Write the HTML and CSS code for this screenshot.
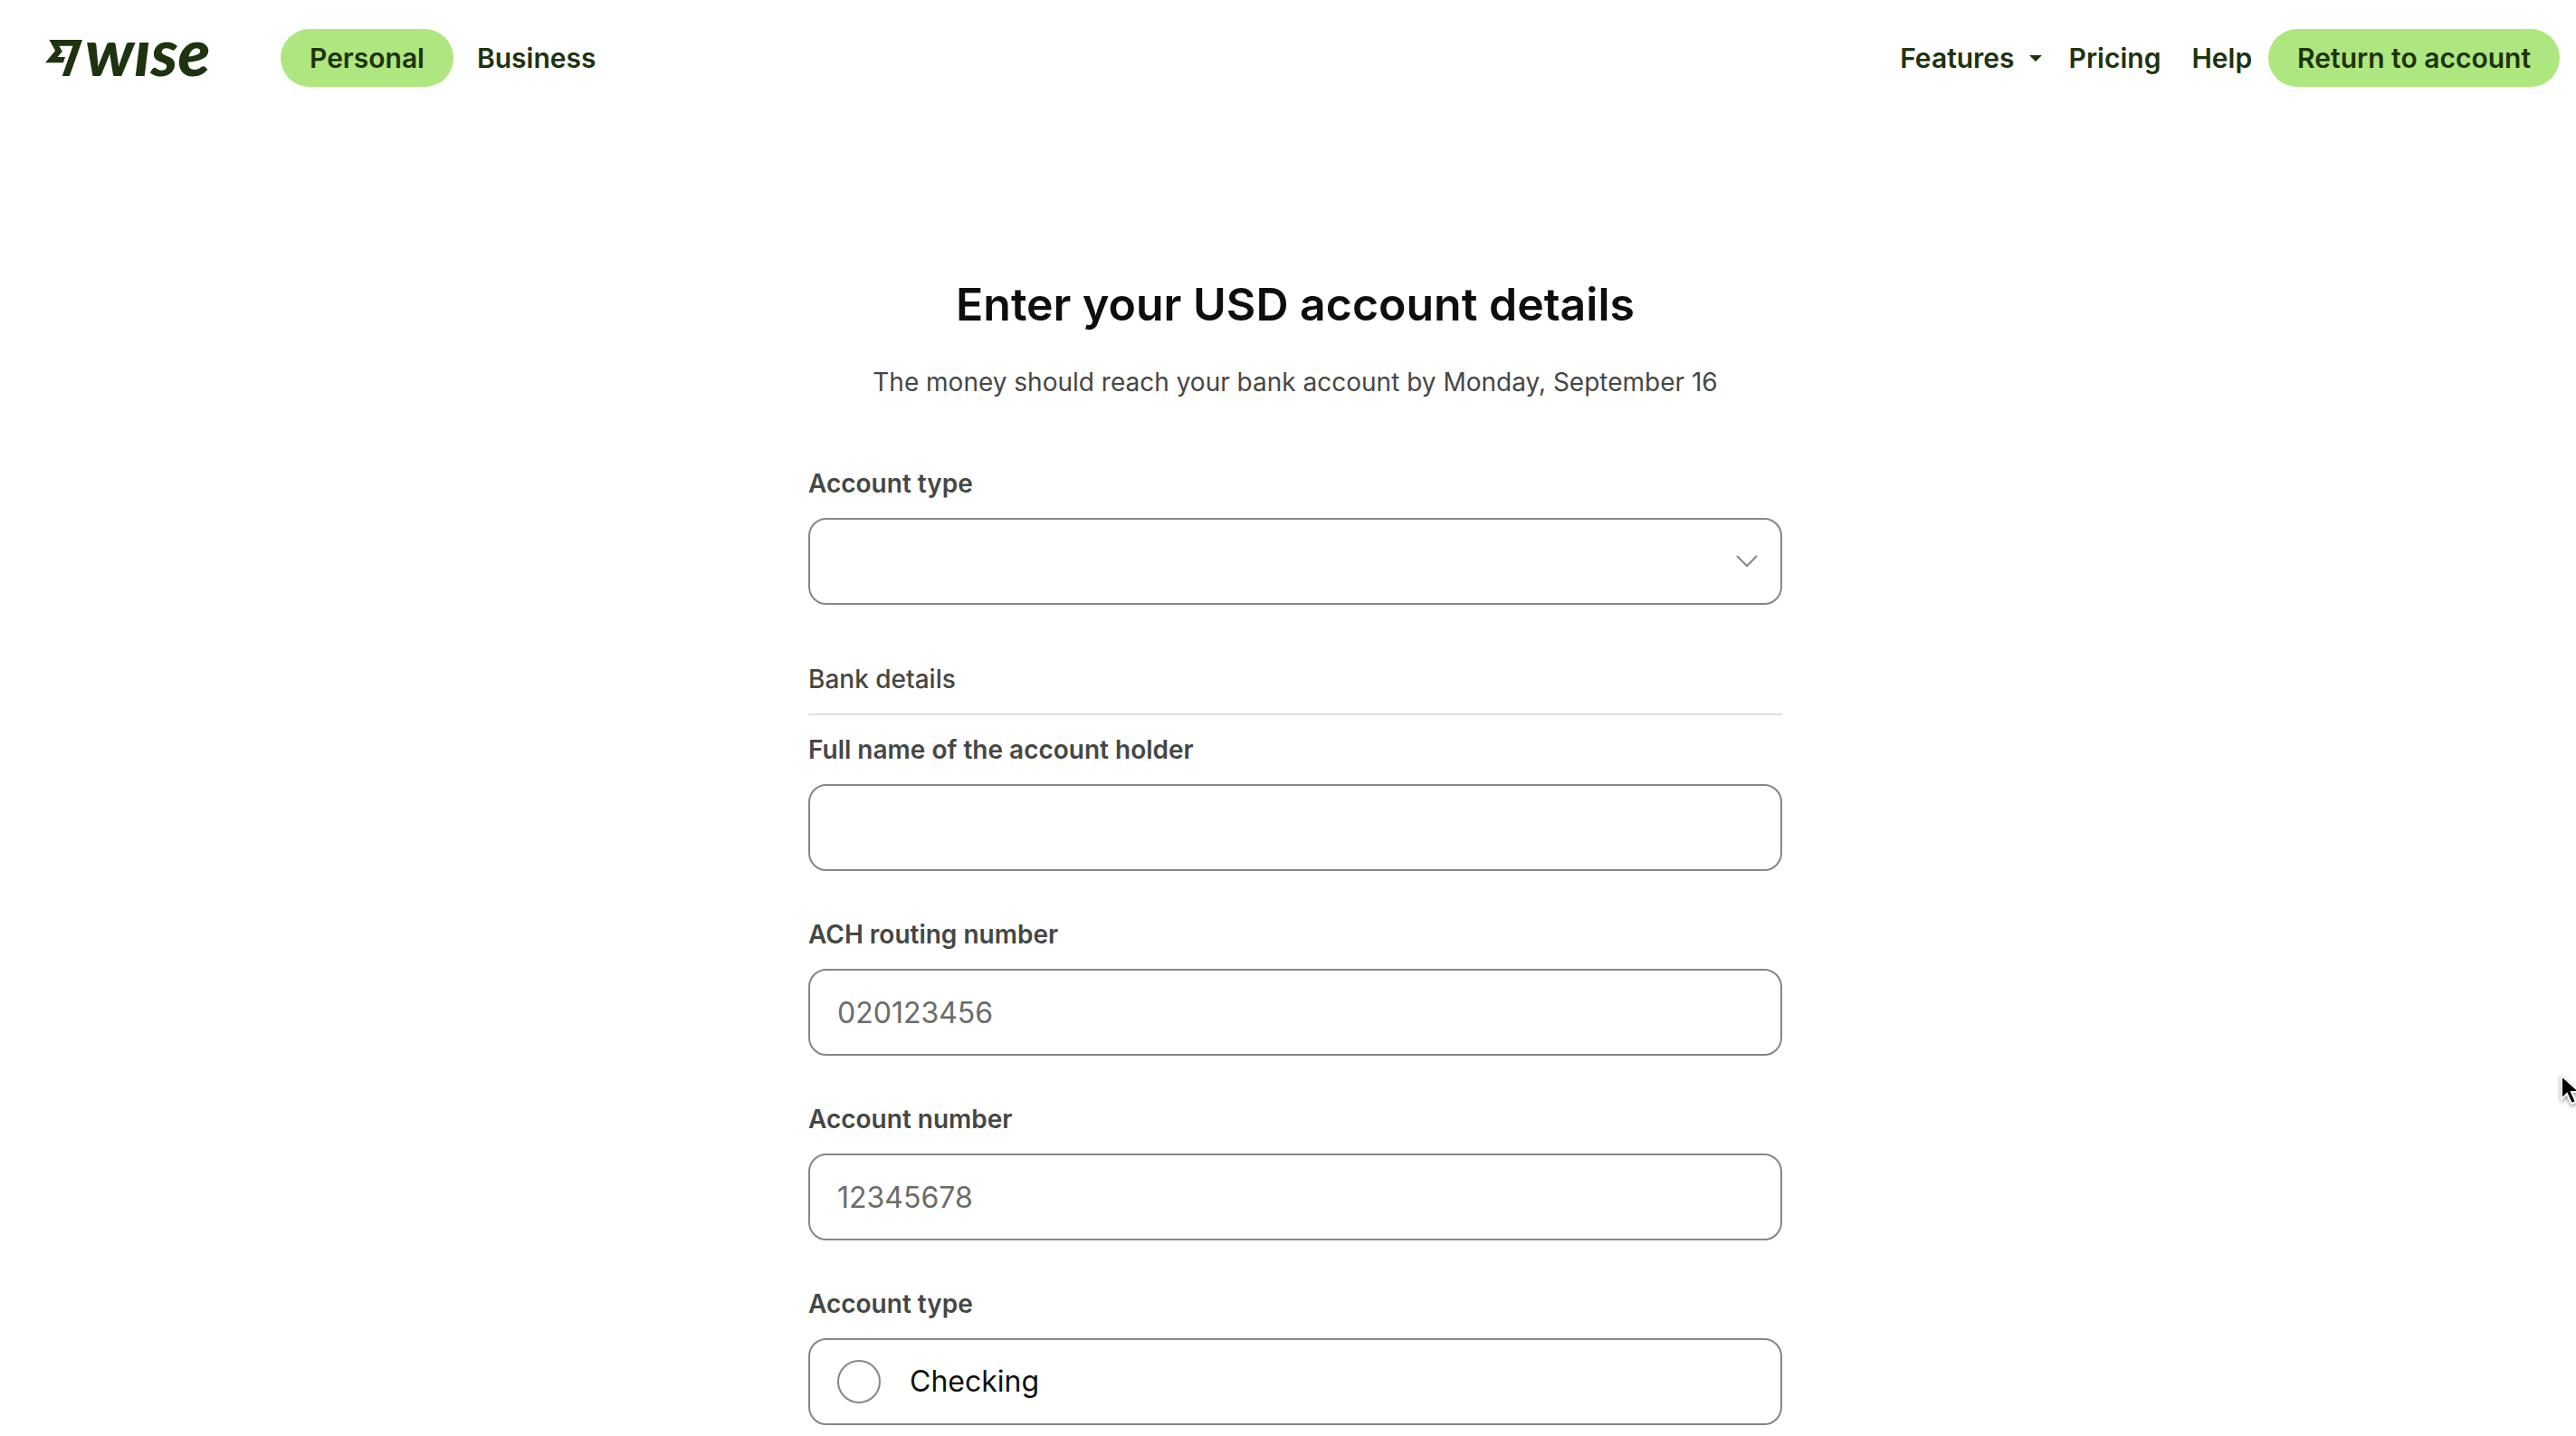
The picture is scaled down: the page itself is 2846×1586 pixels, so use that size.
FILE: index.html
```html
<!DOCTYPE html>
<html lang="en">
<head>
<meta charset="utf-8">
<meta name="viewport" content="width=device-width, initial-scale=1">
<title>Enter your USD account details</title>
<link rel="stylesheet" href="styles.css">
</head>
<body>

<header class="header">
  <a class="logo" href="#" aria-label="Wise">
    <svg class="flag" viewBox="0 0.6 24 22.8" preserveAspectRatio="none" aria-hidden="true">
      <path d="M6.488 7.469 0 15.05h11.585l1.301-3.576H7.922l3.033-3.507.01-.092L8.993 4.48h8.873l-6.878 18.925h4.706L24 .595H2.543l3.945 6.874z"/>
    </svg>
    <span class="wordmark">wıse</span>
  </a>

  <nav class="nav nav-left">
    <a class="pill" href="#">Personal</a>
    <a class="business" href="#">Business</a>
  </nav>

  <nav class="nav nav-right">
    <button class="features" type="button">Features <span class="caret"></span></button>
    <a class="pricing" href="#">Pricing</a>
    <a class="help" href="#">Help</a>
    <a class="pill" href="#">Return to account</a>
  </nav>
</header>

<main class="main">
  <div class="container">
    <h1>Enter your USD account details</h1>
    <p class="subtitle">The money should reach your bank account by Monday, September 16</p>

    <form>
      <div class="field">
        <label for="type">Account type</label>
        <div class="select-wrap">
          <select id="type" class="control">
            <option value=""></option>
          </select>
          <svg class="chevron" viewBox="0 0 24 14" aria-hidden="true">
            <path d="M1 1l11 11L23 1"/>
          </svg>
        </div>
      </div>

      <h2>Bank details</h2>

      <div class="field">
        <label for="holder">Full name of the account holder</label>
        <input id="holder" class="control" type="text">
      </div>

      <div class="field">
        <label for="routing">ACH routing number</label>
        <input id="routing" class="control" type="text" placeholder="020123456">
      </div>

      <div class="field">
        <label for="number">Account number</label>
        <input id="number" class="control" type="text" placeholder="12345678">
      </div>

      <fieldset class="field">
        <legend>Account type</legend>
        <label class="control option">
          <input type="radio" name="kind" value="checking">
          Checking
        </label>
      </fieldset>
    </form>
  </div>
</main>

<!-- mouse pointer -->
<svg class="pointer" viewBox="0 0 24 36" aria-hidden="true">
  <path d="M2 2v26l6-6 5 11 5-2-5-11h9z"/>
</svg>

</body>
</html>
```

FILE: styles.css
```css
* {
  box-sizing: border-box;
}

body {
  margin: 0;
  background: #fff;
  color: #0e0f0c;
  font-family: Inter, "Liberation Sans", sans-serif;
  font-size: 28px;
  line-height: 44px;
}

/* Header */
.header {
  display: flex;
  align-items: center;
  height: 128px;
  padding: 0 18px 0 50px;
  font-size: 30px;
  font-weight: 600;
}

.header a,
.features {
  color: #1e330f;
  text-decoration: none;
}

.logo {
  display: flex;
  align-items: center;
  width: 260px;
}

.flag {
  width: 41px;
  height: 40px;
  fill: #1e330f;
}

.wordmark {
  margin-left: 3px;
  padding-bottom: 16px;
  font-family: Lato, sans-serif;
  font-size: 73px;
  font-style: italic;
  font-weight: 900;
  line-height: 64px;
}

.nav {
  display: flex;
  align-items: center;
}

.nav-right {
  margin-left: auto;
}

.header .pill {
  padding: 10px 32px;
  border-radius: 32px;
  background: #aee780;
}

.business {
  margin-left: 26px;
}

.features {
  display: flex;
  align-items: center;
  gap: 16px;
  padding: 0;
  border: 0;
  background: none;
  font: inherit;
}

.caret {
  border: 7px solid transparent;
  border-top-color: #1e330f;
  border-bottom: 0;
}

.pricing {
  margin-left: 30px;
}

.help {
  margin: 0 18px 0 34px;
}

/* Form */
.main {
  padding: 176px 0 48px 16px;
}

.container {
  width: 1076px;
  max-width: 100%;
  margin: 0 auto;
}

h1 {
  margin: 0 0 32px;
  font-size: 50px;
  font-weight: 600;
  line-height: 64px;
  text-align: center;
}

.subtitle {
  margin: 0 0 68px;
  color: #454745;
  text-align: center;
}

.field {
  margin: 0 0 48px;
  padding: 0;
  border: 0;
}

.field > label,
legend {
  display: block;
  margin-bottom: 16px;
  padding: 0;
  color: #454745;
  font-weight: 600;
}

.control {
  display: block;
  width: 100%;
  height: 96px;
  padding: 0 30px;
  border: 2px solid #868685;
  border-radius: 20px;
  background: #fff;
  color: #0e0f0c;
  font-family: inherit;
  font-size: 32px;
  appearance: none;
}

.control::placeholder {
  color: #6a6c6a;
  opacity: 1;
}

.select-wrap {
  position: relative;
}

.chevron {
  position: absolute;
  top: 41px;
  right: 27px;
  width: 24px;
  height: 14px;
  fill: none;
  stroke: #868685;
  stroke-width: 2;
  pointer-events: none;
}

h2 {
  margin: 60px 0 16px;
  padding-bottom: 16px;
  border-bottom: 2px solid #e1e1e1;
  color: #454745;
  font-size: 28px;
  font-weight: 500;
}

.field > .option {
  display: flex;
  align-items: center;
  gap: 32px;
  margin: 0;
  padding: 0 30px;
  color: #0e0f0c;
  font-weight: 400;
}

.option input {
  width: 48px;
  height: 48px;
  margin: 0;
  border: 2px solid #868685;
  border-radius: 50%;
  appearance: none;
}

.pointer {
  position: fixed;
  top: 1186px;
  right: -6px;
  width: 24px;
  height: 36px;
  stroke: #fff;
  stroke-width: 2;
  filter: drop-shadow(0 2px 2px rgba(0, 0, 0, .4));
}
```
